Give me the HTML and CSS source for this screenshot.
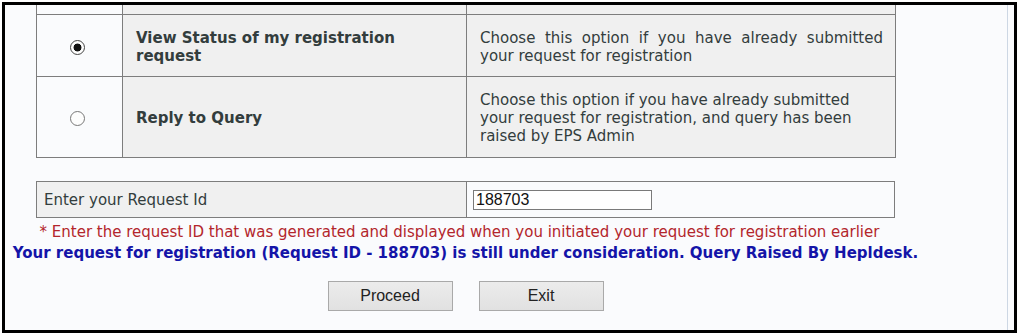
FILE: index.html
```html
<!DOCTYPE html>
<html>
<head>
<meta charset="utf-8">
<link rel="stylesheet" href="styles.css">
</head>
<body>
<div class="frame">
  <div class="pane">
    <table class="opts">
      <colgroup><col class="c1"><col class="c2"><col class="c3"></colgroup>
      <tr class="cut"><td class="rad"></td><td class="name"></td><td class="desc"></td></tr>
      <tr class="r1">
        <td class="rad"><input type="radio" name="opt" checked></td>
        <td class="name">View Status of my registration request</td>
        <td class="desc just">Choose this option if you have already submitted your request for registration</td>
      </tr>
      <tr class="r2">
        <td class="rad"><input type="radio" name="opt"></td>
        <td class="name">Reply to Query</td>
        <td class="desc">Choose this option if you have already submitted your request for registration, and query has been raised by EPS Admin</td>
      </tr>
    </table>

    <table class="req">
      <tr>
        <td class="lbl">Enter your Request Id</td>
        <td class="val"><input class="idbox" type="text" value="188703"></td>
      </tr>
    </table>

    <div class="msgs">
      <div class="line"><span class="hint">* Enter the request ID that was generated and displayed when you initiated your request for registration earlier</span></div>
      <div class="line"><span class="status">Your request for registration (Request ID - 188703) is still under consideration. Query Raised By Hepldesk.</span></div>
    </div>

    <div class="btns">
      <button class="btn">Proceed</button>
      <button class="btn">Exit</button>
    </div>
  </div>
</div>
</body>
</html>
```

FILE: styles.css
```css
html, body {
  margin: 0;
  padding: 0;
  background: #ffffff;
}
body {
  padding: 2px 0 0 2px;
  font-family: "DejaVu Sans", Verdana, sans-serif;
  font-size: 15px;
  color: #333d3d;
}
.frame {
  box-sizing: border-box;
  width: 1015px;
  height: 331px;
  border: 3px solid #000;
  background: #fafbfd;
  overflow: hidden;
}
.pane {
  box-sizing: border-box;
  width: 1003px;
  height: 100%;
  border-right: 1px solid #cdd7e4;
  padding-left: 31px;
}
table {
  border-collapse: collapse;
  table-layout: fixed;
}
.opts {
  width: 859px;
}
col.c1 { width: 86px; }
col.c2 { width: 344px; }
col.c3 { width: 429px; }
.opts td {
  border: 1px solid #7d7d7d;
  line-height: 18px;
  vertical-align: middle;
}
.opts tr.cut td {
  border-top: none;
  height: 9px;
  padding: 0;
  background: #f0f0f0;
}
.opts tr.cut td.rad { background: #fafbfd; }
.opts tr.r1 td { height: 59px; padding: 2px 0 0 0; }
.opts tr.r2 td { height: 79px; padding: 1px 0 0 0; }
td.rad {
  background: #fafbfd;
  text-align: center;
}
td.name {
  background: #f0f0f0;
  font-weight: bold;
  padding-left: 13px !important;
  padding-right: 14px !important;
}
td.desc {
  background: #f0f0f0;
  padding-left: 13px !important;
  padding-right: 12px !important;
}
td.just { text-align: justify; }

input[type="radio"] {
  -webkit-appearance: none;
  appearance: none;
  box-sizing: border-box;
  width: 15px;
  height: 15px;
  margin: 0 0 0 -4px;
  border: 1px solid #777;
  border-radius: 50%;
  background: #fdfdfd;
  vertical-align: middle;
}
input[type="radio"]:checked {
  border-color: #444;
  background: radial-gradient(circle, #111 0, #111 3.6px, #fdfdfd 4.3px);
}

.req {
  width: 859px;
  margin-top: 23px;
}
.req td {
  border: 1px solid #7d7d7d;
  height: 35px;
  padding: 0;
  vertical-align: middle;
}
td.lbl {
  width: 422px;
  background: #f0f0f0;
  padding-left: 7px;
}
td.val {
  background: #fafbfd;
  padding-left: 6px;
}
.idbox {
  box-sizing: border-box;
  width: 179px;
  height: 20px;
  margin: 0;
  padding: 0 2px;
  border: 1px solid #7a7a7a;
  background: #ffffff;
  font-family: "Liberation Sans", Arial, sans-serif;
  font-size: 16px;
  color: #111;
  display: block;
}

.msgs {
  width: 859px;
  margin-top: 5px;
}
.line {
  display: flex;
  justify-content: center;
  white-space: nowrap;
  line-height: 19px;
}
.hint {
  color: #b3262c;
  margin-right: 12px;
}
.status {
  color: #1414a8;
  font-weight: bold;
  margin-top: 2px;
}

.btns {
  width: 859px;
  display: flex;
  justify-content: center;
  gap: 26px;
  margin-top: 18px;
}
.btn {
  box-sizing: border-box;
  width: 125px;
  height: 30px;
  margin: 0;
  border: 1px solid #a9a9a9;
  background: linear-gradient(#ececec, #e1e1e1);
  font-family: "Liberation Sans", Arial, sans-serif;
  font-size: 16px;
  color: #222;
  padding: 0;
}
```
